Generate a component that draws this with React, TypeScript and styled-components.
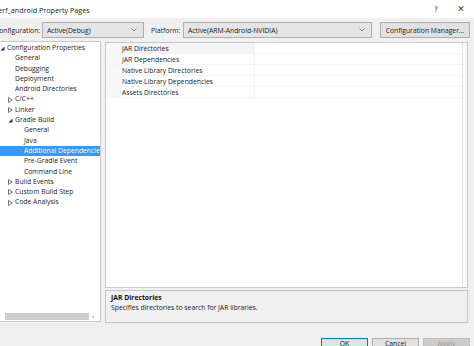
import React from "react";
import styled, { createGlobalStyle } from "styled-components";

const Global = createGlobalStyle`
  html, body { margin: 0; padding: 0; background: #f0f0f0; overflow: hidden; }
  body { font-family: "Open Sans", "Noto Sans", "Liberation Sans", sans-serif; color: #1e1e1e; }
`;

const FONT = 6.8;

const Window = styled.div`
  width: 482px;
  height: 346px;
  overflow: hidden;
  margin-left: -6px;
  background: #f0f0f0;
  display: flex;
  flex-direction: column;
  font-size: ${FONT}px;
  & > * { flex-shrink: 0; }
`;

const TitleBar = styled.div`
  height: 18px;
  background: #ffffff;
  display: flex;
  align-items: center;
  justify-content: space-between;
`;

const Title = styled.div`
  font-size: 7.2px;
  color: #202020;
  padding-top: 1px;
`;

const TitleControls = styled.div`
  display: flex;
  align-items: center;
  gap: 9px;
  margin-right: 7px;
  color: #444;
`;

const ControlGlyph = styled.span<{ $size: number }>`
  width: 16px;
  display: flex;
  justify-content: center;
  font-size: ${(p) => p.$size}px;
  font-family: "DejaVu Sans", sans-serif;
`;

const ConfigRow = styled.div`
  height: 23px;
  display: flex;
  align-items: center;
  padding-top: 1px;
  box-sizing: border-box;
`;

const Label = styled.span<{ $ml: number; $w: number }>`
  margin-left: ${(p) => p.$ml}px;
  width: ${(p) => p.$w}px;
  margin-right: 5px;
  color: #222;
  white-space: nowrap;
`;

const Combo = styled.div<{ $w: number }>`
  width: ${(p) => p.$w}px;
  height: 16px;
  box-sizing: border-box;
  border: 1px solid #adadad;
  background: #e5e5e5;
  display: flex;
  align-items: center;
  justify-content: space-between;
  padding: 0 6px 0 4px;
  color: #222;
`;

const Chevron = styled.svg`
  width: 6px;
  height: 4px;
`;

const Button = styled.div<{ $w: number; $ml?: number; $primary?: boolean; $disabled?: boolean }>`
  width: ${(p) => p.$w}px;
  margin-left: ${(p) => p.$ml ?? 0}px;
  height: 16px;
  box-sizing: border-box;
  border: 1px solid ${(p) => (p.$primary ? "#0078d7" : p.$disabled ? "#bfbfbf" : "#adadad")};
  background: ${(p) => (p.$disabled ? "#cccccc" : "#e1e1e1")};
  color: ${(p) => (p.$disabled ? "#9a9a9a" : "#222")};
  display: flex;
  align-items: center;
  justify-content: center;
  white-space: nowrap;
`;

const DialogButton = styled(Button)`
  height: 16px;
  align-items: flex-start;
  padding-top: 2px;
  line-height: 1;
`;

const Main = styled.div`
  display: flex;
  height: 282px;
`;

const TreePanel = styled.div`
  width: 107px;
  height: 281px;
  box-sizing: border-box;
  border: 1px solid #c8c8c8;
  background: #ffffff;
  display: flex;
  flex-direction: column;
`;

const TreeList = styled.div`
  flex: 1;
  padding-top: 1px;
  overflow: hidden;
`;

const TreeRow = styled.div<{ $indent: number; $selected?: boolean }>`
  height: 10.3px;
  line-height: 10.3px;
  display: flex;
  align-items: center;
  padding-left: ${(p) => p.$indent}px;
  white-space: nowrap;
  background: ${(p) => (p.$selected ? "#3399ff" : "transparent")};
  color: ${(p) => (p.$selected ? "#ffffff" : "#222")};
`;

const Expander = styled.span`
  width: 7px;
  display: inline-flex;
  align-items: center;
  justify-content: flex-start;
`;

const HScroll = styled.div`
  height: 9px;
  display: flex;
  align-items: center;
  padding: 0 3px 0 10px;
  gap: 3px;
`;

const Thumb = styled.div`
  flex: 1;
  height: 7px;
  background: #cdcdcd;
`;

const ArrowGlyph = styled.span`
  font-size: 7px;
  color: #606060;
  width: 5px;
`;

const RightCol = styled.div`
  margin-left: 4px;
  width: 363px;
  display: flex;
  flex-direction: column;
`;

const Grid = styled.div`
  height: 247px;
  margin-top: 1px;
  box-sizing: border-box;
  border: 1px solid #c8c8c8;
  background: #ffffff;
  display: flex;
`;

const GridBody = styled.div`
  flex: 1;
  display: flex;
  flex-direction: column;
`;

const GridRow = styled.div`
  height: 11px;
  display: flex;
  border-bottom: 1px solid #f3f3f3;
  box-sizing: border-box;
`;

const Gutter = styled.div`
  width: 15px;
  background: #f7f7f7;
`;

const NameCell = styled.div<{ $selected?: boolean }>`
  width: 132px;
  padding-left: 1px;
  display: flex;
  align-items: center;
  background: ${(p) => (p.$selected ? "#f2f4f7" : "transparent")};
  border-right: 1px solid #f0f0f0;
  white-space: nowrap;
  color: #222;
`;

const ValueCell = styled.div`
  flex: 1;
`;

const VScroll = styled.div`
  width: 4px;
  border-left: 1px solid #e2e2e2;
  background: #fafafa;
`;

const Desc = styled.div`
  margin-top: 2px;
  height: 33px;
  box-sizing: border-box;
  border: 1px solid #c8c8c8;
  background: #f0f0f0;
  padding: 2px 0 0 5px;
  display: flex;
  flex-direction: column;
  gap: 1px;
`;

const DescTitle = styled.div`
  font-weight: 700;
  color: #111;
`;

const DescText = styled.div`
  color: #222;
`;

const ButtonRow = styled.div`
  display: flex;
  justify-content: flex-end;
  gap: 4px;
  padding-right: 6px;
  margin-top: 15px;
`;

const Collapsed = () => (
  <svg width="5" height="6" viewBox="0 0 5 6">
    <path d="M0.5 0.5 L4.3 3 L0.5 5.5 Z" fill="none" stroke="#555" strokeWidth="0.8" />
  </svg>
);

const Expanded = () => (
  <svg width="5" height="5" viewBox="0 0 5 5">
    <path d="M4.5 0.5 L4.5 4.5 L0.5 4.5 Z" fill="#333" />
  </svg>
);

type Node = { label: string; indent: number; exp?: "open" | "closed"; selected?: boolean };

const tree: Node[] = [
  { label: "Configuration Properties", indent: 12, exp: "open" },
  { label: "General", indent: 20 },
  { label: "Debugging", indent: 20 },
  { label: "Deployment", indent: 20 },
  { label: "Android Directories", indent: 20 },
  { label: "C/C++", indent: 20, exp: "closed" },
  { label: "Linker", indent: 20, exp: "closed" },
  { label: "Gradle Build", indent: 20, exp: "open" },
  { label: "General", indent: 29 },
  { label: "Java", indent: 29 },
  { label: "Additional Dependencies", indent: 29, selected: true },
  { label: "Pre-Gradle Event", indent: 29 },
  { label: "Command Line", indent: 29 },
  { label: "Build Events", indent: 20, exp: "closed" },
  { label: "Custom Build Step", indent: 20, exp: "closed" },
  { label: "Code Analysis", indent: 20, exp: "closed" },
];

const props = [
  "JAR Directories",
  "JAR Dependencies",
  "Native Library Directories",
  "Native Library Dependencies",
  "Assets Directories",
];

const ChevronIcon = () => (
  <Chevron viewBox="0 0 6 4">
    <path d="M0.5 0.5 L3 3 L5.5 0.5" fill="none" stroke="#666" strokeWidth="0.8" />
  </Chevron>
);

export default function App() {
  return (
    <>
      <Global />
      <Window>
        <TitleBar>
          <Title>Perf_android Property Pages</Title>
          <TitleControls>
            <ControlGlyph $size={7.5}>?</ControlGlyph>
            <ControlGlyph $size={9}>✕</ControlGlyph>
          </TitleControls>
        </TitleBar>
        <ConfigRow>
          <Label $ml={1} $w={42}>Configuration:</Label>
          <Combo $w={102}>
            <span>Active(Debug)</span>
            <ChevronIcon />
          </Combo>
          <Label $ml={7} $w={27}>Platform:</Label>
          <Combo $w={189}>
            <span>Active(ARM-Android-NVIDIA)</span>
            <ChevronIcon />
          </Combo>
          <Button $w={90} $ml={8}>Configuration Manager...</Button>
        </ConfigRow>
        <Main>
          <TreePanel>
            <TreeList>
              {tree.map((n, i) => (
                <TreeRow key={i} $indent={n.indent - 7 * (n.exp ? 1 : 0)} $selected={n.selected}>
                  {n.exp && <Expander>{n.exp === "open" ? <Expanded /> : <Collapsed />}</Expander>}
                  {n.label}
                </TreeRow>
              ))}
            </TreeList>
            <HScroll>
              <Thumb />
              <ArrowGlyph>›</ArrowGlyph>
            </HScroll>
          </TreePanel>
          <RightCol>
            <Grid>
              <GridBody>
                {props.map((p, i) => (
                  <GridRow key={p}>
                    <Gutter />
                    <NameCell $selected={i === 0}>{p}</NameCell>
                    <ValueCell />
                  </GridRow>
                ))}
              </GridBody>
              <VScroll />
            </Grid>
            <Desc>
              <DescTitle>JAR Directories</DescTitle>
              <DescText>Specifies directories to search for JAR libraries.</DescText>
            </Desc>
          </RightCol>
        </Main>
        <ButtonRow>
          <DialogButton $w={47} $primary>OK</DialogButton>
          <DialogButton $w={47}>Cancel</DialogButton>
          <DialogButton $w={47} $disabled>Apply</DialogButton>
        </ButtonRow>
      </Window>
    </>
  );
}
